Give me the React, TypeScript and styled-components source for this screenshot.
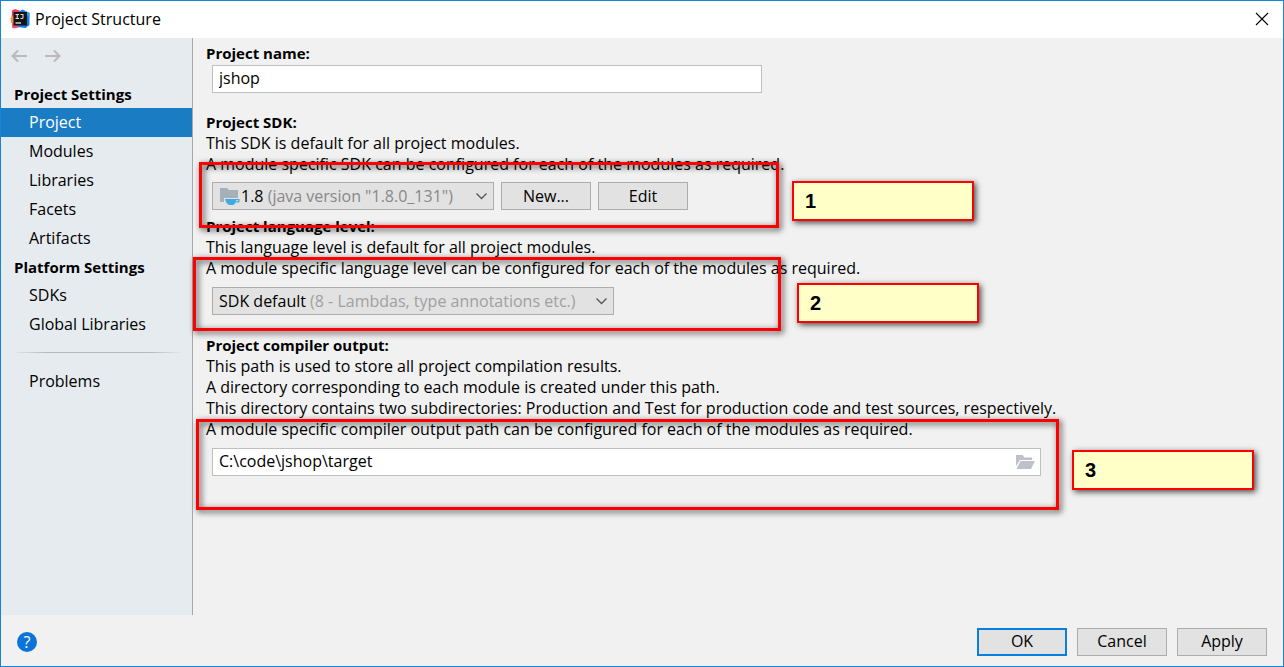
import React from 'react';
import styled, { createGlobalStyle, css } from 'styled-components';

const GlobalStyle = createGlobalStyle`
  *, *::before, *::after { box-sizing: border-box; }
  body { margin: 0; }
  body, button, input, select {
    font-family: "Open Sans", "Noto Sans CJK SC", sans-serif;
    font-size: 16px;
    line-height: 21px;
    color: #000;
  }
`;

const boldText = css`
  font-size: 15px;
  font-weight: 700;
`;

const Window = styled.div`
  display: flex;
  flex-direction: column;
  min-height: 100vh;
  border: 1px solid #1883d7;
  background: #f1f1f1;
`;

const TitleBar = styled.header`
  display: flex;
  align-items: center;
  gap: 5px;
  height: 37px;
  padding: 0 14px 1px 9px;
  background: #fff;
`;

const Title = styled.h1`
  flex: 1;
  margin: 0;
  font-size: 16px;
  font-weight: 400;
`;

const IconButton = styled.button`
  display: flex;
  align-items: center;
  justify-content: center;
  padding: 0;
  border: 0;
  background: none;
`;

const Body = styled.div`
  display: flex;
  flex: 1;
`;

const Sidebar = styled.nav`
  flex: none;
  width: 192px;
  border-right: 1px solid #a8a8a8;
  background: #e6ebef;
`;

const History = styled.div`
  display: flex;
  gap: 16px;
  height: 42px;
  padding: 10px 10px 16px;
`;

const GroupTitle = styled.h2`
  margin: 0;
  padding-left: 13px;
  ${boldText}
  line-height: 28px;
`;

const NavList = styled.ul`
  margin: 0;
  padding: 0;
  list-style: none;
`;

const NavLink = styled.a<{ $active?: boolean }>`
  display: block;
  padding-left: 28px;
  line-height: 29px;
  text-decoration: none;
  color: ${(p) => (p.$active ? '#fff' : '#000')};
  background: ${(p) => (p.$active ? '#1a7dc4' : 'transparent')};
`;

const Divider = styled.hr`
  height: 1px;
  margin: 13px 8px 14px 11px;
  border: 0;
  background: linear-gradient(90deg, transparent, #b8b8b8 20%, #b8b8b8 80%, transparent);
`;

const Main = styled.main`
  flex: 1;
  min-width: 0;
  padding: 5px 13px 0;
`;

const Section = styled.section<{ $gap?: number }>`
  position: relative;
  margin-bottom: ${(p) => p.$gap ?? 0}px;
`;

const Heading = styled.label`
  display: block;
  ${boldText}
`;

const Hint = styled.p`
  margin: 0;
`;

const Controls = styled.div<{ $top?: number }>`
  display: flex;
  gap: 7px;
  padding-left: 6px;
  margin-top: ${(p) => p.$top ?? 0}px;
`;

const Field = styled.div<{ $width: number }>`
  display: flex;
  align-items: center;
  flex: 0 1 ${(p) => p.$width}px;
  height: 28px;
  padding: 0 5px 0 6px;
  border: 1px solid #bfbfbf;
  background: #fff;
`;

const TextInput = styled.input`
  flex: 1;
  min-width: 0;
  height: 26px;
  padding: 0 0 2px;
  border: 0;
  outline: 0;
  background: none;
`;

const Combo = styled.div<{ $width: number }>`
  display: flex;
  align-items: center;
  flex: none;
  width: ${(p) => p.$width}px;
  height: 28px;
  padding: 0 5px 0 6px;
  border: 1px solid #adadad;
  background: #e2e2e2;
`;

const ComboValue = styled.span`
  white-space: pre;
`;

const ComboSelect = styled.select<{ $tone: string }>`
  flex: 1;
  min-width: 0;
  height: 26px;
  padding: 0;
  border: 0;
  outline: 0;
  appearance: none;
  background: none;
  color: ${(p) => p.$tone};
`;

const Button = styled.button<{ $primary?: boolean }>`
  width: 90px;
  height: 28px;
  padding: 0;
  border: 1px solid #adadad;
  background: #e2e2e2;
  ${(p) =>
    p.$primary &&
    css`
      border: 2px solid #0a7fdc;
    `}
`;

const Footer = styled.footer`
  display: flex;
  align-items: center;
  gap: 10px;
  height: 51px;
  padding: 2px 16px 0;
`;

const HelpButton = styled.button`
  width: 20px;
  height: 20px;
  margin-right: auto;
  padding: 0;
  border: 0;
  border-radius: 50%;
  background: #0b74d6;
  color: #fff;
  line-height: 20px;
`;

interface BoxProps {
  $x: number;
  $y: number;
  $w: number;
  $h: number;
}

const Frame = styled.div<BoxProps>`
  position: absolute;
  left: ${(p) => p.$x}px;
  top: ${(p) => p.$y}px;
  width: ${(p) => p.$w}px;
  height: ${(p) => p.$h}px;
  border: 3px solid #f00;
  filter: drop-shadow(2px 2px 3px rgba(0, 0, 0, 0.8));
  pointer-events: none;
`;

const Callout = styled.div<{ $x: number; $y: number }>`
  position: absolute;
  left: ${(p) => p.$x}px;
  top: ${(p) => p.$y}px;
  width: 182px;
  height: 40px;
  padding-left: 11px;
  border: 2px solid #f00;
  background: #ffffc8;
  box-shadow: 2px 2px 6px rgba(0, 0, 0, 0.7);
  font: 700 20px/37px "Liberation Sans", sans-serif;
`;

const Logo = () => (
  <svg width="20" height="20" viewBox="0 0 20 20" aria-hidden="true">
    <path d="M2 1.500 5 0l7 2.500-6 7H1.500z" fill="#ee3d63" />
    <path d="M0.500 9.500l2.500-3 3 7-2 3-3-3z" fill="#fb8a3c" />
    <path d="M2 14l6 2 .500 2.500-4 1-2.500-1z" fill="#f0506e" />
    <path d="M10 2 12.500 .5 19.500 4v12L15.500 19 8 18z" fill="#0a7cf0" />
    <path d="M14 1.500l5.500 2.500v5L16 5z" fill="#2b9cf7" />
    <path d="M3.500 3H17v13.500H3.500z" fill="#141414" />
    <path d="M5.500 5.500H9M7.250 5.500v4M5.500 9.500H9M10.500 5.500h2.500v3q0 1-1 1h-1.500" fill="none" stroke="#ddd" strokeWidth="1.100" />
    <path d="M5.500 14h5.500" stroke="#fff" strokeWidth="1.200" />
  </svg>
);

const CloseIcon = () => (
  <svg width="14" height="14" viewBox="0 0 14 14" aria-hidden="true">
    <path d="M1 1l12 12M13 1 1 13" stroke="#000" strokeWidth="1.100" />
  </svg>
);

const Arrow = ({ flip }: { flip?: boolean }) => (
  <svg width="17" height="14" viewBox="0 0 17 14" aria-hidden="true">
    <path
      d={flip ? 'M1 7h14.500M10 1.500 15.500 7 10 12.500' : 'M16 7H1.500M7 1.500 1.500 7 7 12.500'}
      fill="none"
      stroke="#bababa"
      strokeWidth="2"
    />
  </svg>
);

const Chevron = () => (
  <svg width="13" height="8" viewBox="0 0 13 8" aria-hidden="true">
    <path d="M1.500 1.500l5 5 5-5" fill="none" stroke="#555" strokeWidth="1.300" />
  </svg>
);

const SdkIcon = () => (
  <svg width="22" height="20" viewBox="0 0 22 20" aria-hidden="true">
    <path d="M1 2h7l2 2h9v9H6v3H1z" fill="#a6b0b8" />
    <path d="M5 12h15.500v5H5z" fill="#e2e2e2" />
    <path d="M6 13h14.500v2.500q0 1-1 1H16.500q-1 2.500-3 2.500h-3q-3.500-1-4.500-6z" fill="#40a9e0" />
    <path d="M17 14.200h2.200v1.200H17z" fill="#e2e2e2" />
  </svg>
);

const OpenFolderIcon = () => (
  <svg width="20" height="16" viewBox="0 0 20 16" aria-hidden="true">
    <path d="M1 1h6.500l2 2.500H17V6H5L1 12z" fill="#bcc2c7" />
    <path d="M5.500 7H20l-4 8H1.500z" fill="#bcc2c7" />
  </svg>
);

const projectSettings = ['Project', 'Modules', 'Libraries', 'Facets', 'Artifacts'];
const platformSettings = ['SDKs', 'Global Libraries'];

const NavGroup = ({ items, active }: { items: string[]; active?: string }) => (
  <NavList>
    {items.map((item) => (
      <li key={item}>
        <NavLink href="#" $active={item === active}>
          {item}
        </NavLink>
      </li>
    ))}
  </NavList>
);

export default function App() {
  return (
    <>
      <GlobalStyle />
      <Window>
        <TitleBar>
          <Logo />
          <Title>Project Structure</Title>
          <IconButton aria-label="Close">
            <CloseIcon />
          </IconButton>
        </TitleBar>
        <Body>
          <Sidebar>
            <History>
              <IconButton aria-label="Back">
                <Arrow />
              </IconButton>
              <IconButton aria-label="Forward">
                <Arrow flip />
              </IconButton>
            </History>
            <GroupTitle>Project Settings</GroupTitle>
            <NavGroup items={projectSettings} active="Project" />
            <GroupTitle>Platform Settings</GroupTitle>
            <NavGroup items={platformSettings} />
            <Divider />
            <NavGroup items={['Problems']} />
          </Sidebar>
          <Main>
            <Section $gap={19}>
              <Heading htmlFor="name">Project name:</Heading>
              <Controls $top={1}>
                <Field $width={550}>
                  <TextInput id="name" defaultValue="jshop" />
                </Field>
              </Controls>
            </Section>

            <Section $gap={6}>
              <Heading htmlFor="sdk">Project SDK:</Heading>
              <Hint>This SDK is default for all project modules.</Hint>
              <Hint>A module specific SDK can be configured for each of the modules as required.</Hint>
              <Controls $top={7}>
                <Combo $width={282}>
                  <SdkIcon />
                  <ComboValue>1.8 </ComboValue>
                  <ComboSelect id="sdk" $tone="#888">
                    <option>(java version "1.8.0_131")</option>
                  </ComboSelect>
                  <Chevron />
                </Combo>
                <Button>New...</Button>
                <Button>Edit</Button>
              </Controls>
            </Section>

            <Section $gap={20}>
              <Heading htmlFor="level">Project language level:</Heading>
              <Hint>This language level is default for all project modules.</Hint>
              <Hint>A module specific language level can be configured for each of the modules as required.</Hint>
              <Controls $top={8}>
                <Combo $width={402}>
                  <ComboValue>SDK default </ComboValue>
                  <ComboSelect id="level" $tone="#a0a0a0">
                    <option>(8 - Lambdas, type annotations etc.)</option>
                  </ComboSelect>
                  <Chevron />
                </Combo>
              </Controls>
              <Frame $x={-7} $y={-54} $w={580} $h={66} />
              <Callout $x={586} $y={-35}>1</Callout>
              <Frame $x={-13} $y={41} $w={588} $h={74} />
              <Callout $x={591} $y={67}>2</Callout>
            </Section>

            <Section>
              <Heading htmlFor="output">Project compiler output:</Heading>
              <Hint>This path is used to store all project compilation results.</Hint>
              <Hint>A directory corresponding to each module is created under this path.</Hint>
              <Hint>
                This directory contains two subdirectories: Production and Test for production code and test sources,
                respectively.
              </Hint>
              <Hint>A module specific compiler output path can be configured for each of the modules as required.</Hint>
              <Controls $top={8}>
                <Field $width={829}>
                  <TextInput id="output" defaultValue="C:\code\jshop\target" />
                  <IconButton aria-label="Browse">
                    <OpenFolderIcon />
                  </IconButton>
                </Field>
              </Controls>
              <Frame $x={-10} $y={84} $w={863} $h={91} />
              <Callout $x={866} $y={115}>3</Callout>
            </Section>
          </Main>
        </Body>
        <Footer>
          <HelpButton aria-label="Help">?</HelpButton>
          <Button $primary>OK</Button>
          <Button>Cancel</Button>
          <Button>Apply</Button>
        </Footer>
      </Window>
    </>
  );
}
